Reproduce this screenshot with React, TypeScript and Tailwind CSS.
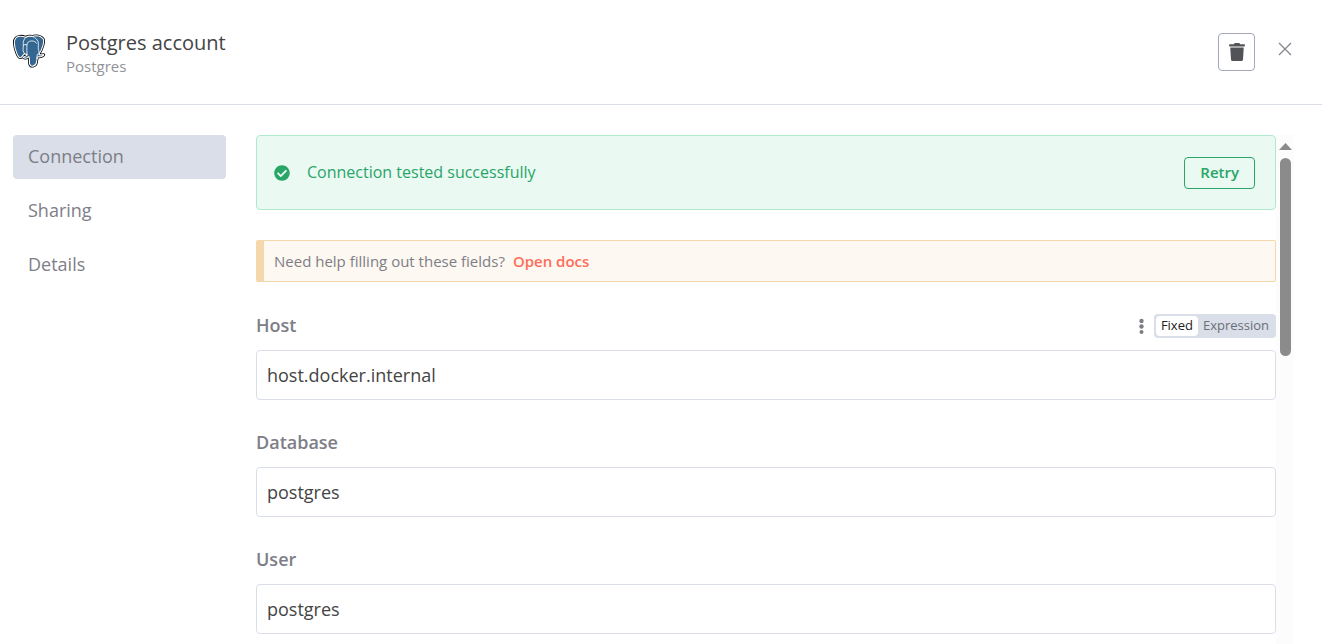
import { useState } from "react";

const TABS = ["Connection", "Sharing", "Details"];

const FIELDS = [
  { id: "host", label: "Host", value: "host.docker.internal", hasOptions: true },
  { id: "database", label: "Database", value: "postgres", hasOptions: false },
  { id: "user", label: "User", value: "postgres", hasOptions: false },
];

const ELEPHANT =
  "M115.731 77.44c-13.925 2.873-14.882-1.842-14.882-1.842 14.703-21.816 20.849-49.51 15.545-56.287C101.924.823 76.875 9.566 76.457 9.793l-.135.024c-2.751-.571-5.83-.911-9.291-.967-6.301-.103-11.08 1.652-14.707 4.402 0 0-44.684-18.408-42.606 23.151.442 8.842 12.672 66.899 27.26 49.363 5.332-6.412 10.483-11.834 10.483-11.834 2.559 1.699 5.622 2.567 8.833 2.255l.25-.212c-.078.796-.042 1.575.1 2.497-3.757 4.199-2.653 4.936-10.166 6.482-7.602 1.566-3.136 4.355-.221 5.084 3.535.884 11.712 2.136 17.237-5.598l-.221.882c1.473 1.18 2.507 7.672 2.334 13.557s-.289 9.926.869 13.084c1.159 3.159 2.314 10.266 12.178 8.153 8.242-1.766 12.514-6.343 13.108-13.977.422-5.427 1.377-4.625 1.437-9.477l.766-2.298c.883-7.357.14-9.729 5.217-8.626l1.234.108c3.735.17 8.623-.601 11.492-1.934 6.177-2.867 9.839-7.654 3.748-6.397z";

function PostgresLogo() {
  return (
    <svg className="size-[34px] shrink-0" viewBox="1 1 126 126" aria-hidden="true">
      <path d={ELEPHANT} fill="#000" stroke="#000" strokeWidth="10" strokeLinejoin="round" />
      <path d={ELEPHANT} fill="#336791" stroke="#fff" strokeWidth="4" strokeLinejoin="round" />
      <g fill="none" stroke="#fff" strokeWidth="3" strokeLinecap="round" strokeLinejoin="round">
        <path d="M52.300 13.300C43 21 41 33 43 43c.6 7-2 12-1 19 .6 5 3 9 6 12" />
        <path d="M56 79c3-6-1-14 0-22 .5-8-1-14 2-22 5-11 28-12 35 1" />
        <path d="M76.400 9.800C89 13 98 25 99 36c1 7-1 10-1 16 0 8 5 12 2.900 23.600" />
        <path d="M43 43c4-3 8-4 13-2" />
        <path d="M95 76c-2 6-1 10-2 16" />
      </g>
    </svg>
  );
}

function TrashIcon() {
  return (
    <svg className="h-[18px] w-4" viewBox="0 0 448 512" fill="currentColor" aria-hidden="true">
      <path d="M432 32H312l-9.400-18.700A24 24 0 0 0 281.100 0H166.800a23.700 23.700 0 0 0-21.400 13.300L136 32H16A16 16 0 0 0 0 48v32a16 16 0 0 0 16 16h416a16 16 0 0 0 16-16V48a16 16 0 0 0-16-16zM53.200 467a48 48 0 0 0 47.900 45h245.800a48 48 0 0 0 47.900-45L416 128H32z" />
    </svg>
  );
}

function CloseIcon() {
  return (
    <svg className="size-3.5" viewBox="0 0 14 14" fill="none" stroke="currentColor" strokeWidth="1.300" aria-hidden="true">
      <path d="M1 1l12 12M13 1L1 13" />
    </svg>
  );
}

function CheckIcon() {
  return (
    <svg className="size-4 shrink-0" viewBox="0 0 512 512" fill="currentColor" aria-hidden="true">
      <path d="M504 256c0 137-111 248-248 248S8 393 8 256 119 8 256 8s248 111 248 248zM227.300 387.300l184-184c6.200-6.200 6.200-16.400 0-22.600l-22.600-22.600c-6.200-6.200-16.400-6.200-22.600 0L216 308.100l-70.100-70.100c-6.200-6.200-16.400-6.200-22.600 0l-22.600 22.600c-6.200 6.200-6.200 16.400 0 22.600l104 104c6.200 6.300 16.400 6.300 22.600.1z" />
    </svg>
  );
}

function FieldOptions() {
  const [mode, setMode] = useState("Fixed");
  return (
    <div className="flex items-center gap-2.5">
      <button type="button" aria-label="Parameter options" className="text-[#7d7e85]">
        <svg className="h-4 w-[5px]" viewBox="0 0 5 16" fill="currentColor" aria-hidden="true">
          <circle cx="2.500" cy="3" r="2.200" />
          <circle cx="2.500" cy="8.500" r="2.200" />
          <circle cx="2.500" cy="14" r="2" />
        </svg>
      </button>
      <div className="flex h-6 items-center rounded bg-[#d9dee8] p-0.5 text-[13px] font-medium">
        {["Fixed", "Expression"].map((name) => (
          <button
            key={name}
            type="button"
            aria-pressed={mode === name}
            onClick={() => setMode(name)}
            className={
              mode === name
                ? "flex h-5 items-center rounded bg-white px-[5px] text-[#222]"
                : "flex h-5 items-center rounded px-[5px] text-[#6c6e76]"
            }
          >
            {name}
          </button>
        ))}
      </div>
    </div>
  );
}

export default function App() {
  const [tab, setTab] = useState("Connection");
  return (
    <div className="flex h-screen flex-col overflow-hidden bg-white font-['Open_Sans',sans-serif] text-[#444]">
      <header className="flex h-[105px] shrink-0 items-start justify-between border-b border-[#d9dee8] pt-8 pr-[30px] pl-3">
        <div className="flex items-start gap-5">
          <div className="pt-0.5">
            <PostgresLogo />
          </div>
          <div>
            <h1 className="text-xl leading-[22px]">Postgres account</h1>
            <p className="text-[15px] leading-[25px] text-[#909298]">Postgres</p>
          </div>
        </div>
        <div className="flex items-start gap-[23px]">
          <button
            type="button"
            aria-label="Delete credential"
            className="mt-px flex h-[38px] w-[37px] items-center justify-center rounded border border-[#a3a7b8] text-[#525356]"
          >
            <TrashIcon />
          </button>
          <button type="button" aria-label="Close" className="mt-2.5 text-[#84868d]">
            <CloseIcon />
          </button>
        </div>
      </header>

      <div className="flex min-h-0 flex-1 pt-[30px] pr-7 pl-[13px]">
        <nav className="mr-[30px] flex w-[213px] shrink-0 flex-col gap-2.5">
          {TABS.map((name) => (
            <button
              key={name}
              type="button"
              onClick={() => setTab(name)}
              className={
                tab === name
                  ? "h-11 rounded bg-[#d9dee8] px-[15px] pb-0.5 text-left text-lg text-[#7d7e87]"
                  : "h-11 rounded px-[15px] pb-0.5 text-left text-lg text-[#7d7e87]"
              }
            >
              {name}
            </button>
          ))}
        </nav>

        <main className="min-w-0 flex-1 overflow-hidden">
          <div className="flex h-[75px] items-center justify-between rounded border border-[#b0e8cd] bg-[#eaf9f2] pr-5 pl-[17px] text-[#29a568]">
            <div className="flex items-center gap-[17px]">
              <CheckIcon />
              <span className="pb-0.5 text-base">Connection tested successfully</span>
            </div>
            <button type="button" className="h-8 rounded border border-[#29a568] px-[15px] text-[15px] font-semibold">
              Retry
            </button>
          </div>

          <p className="mt-[30px] flex h-[42px] items-center gap-2 rounded-xs border border-l-8 border-[#f4d8ab] bg-[#fdf8f1] pl-2.5 text-[15px] text-[#7d7e87]">
            Need help filling out these fields?
            <a href="#docs" className="font-semibold text-[#ff6d5a]">
              Open docs
            </a>
          </p>

          <form className="mt-[30px] flex flex-col gap-[29px]">
            {FIELDS.map((field) => (
              <div key={field.id} className="flex flex-col gap-3">
                <div className="flex h-[26px] items-end justify-between">
                  <label htmlFor={field.id} className="text-lg leading-[26px] font-semibold text-[#7d7e87]">
                    {field.label}
                  </label>
                  {field.hasOptions && <FieldOptions />}
                </div>
                <input
                  id={field.id}
                  type="text"
                  defaultValue={field.value}
                  className="h-[50px] w-full rounded border border-[#d9dee8] bg-white px-2.5 text-lg text-[#444] outline-none"
                />
              </div>
            ))}
          </form>
        </main>

        <div className="flex w-[18px] shrink-0 flex-col items-center gap-2 bg-[#fcfcfc] pt-2" aria-hidden="true">
          <svg className="h-[7px] w-[13px]" viewBox="0 0 13 7" fill="#8b8b8b">
            <path d="M6.500 0L13 7H0z" />
          </svg>
          <div className="h-[198px] w-[11px] rounded-full bg-[#8b8b8b]" />
        </div>
      </div>
    </div>
  );
}
